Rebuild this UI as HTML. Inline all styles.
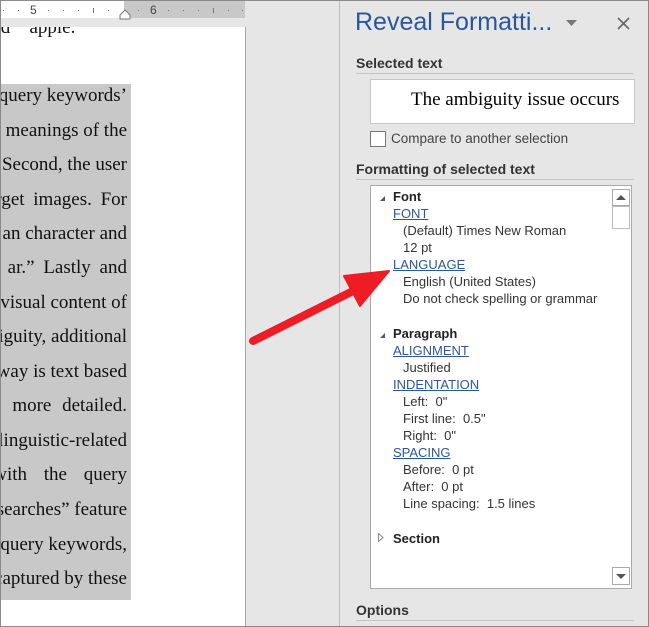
<!DOCTYPE html>
<html><head><meta charset="utf-8"><style>
*{margin:0;padding:0;box-sizing:border-box}
body{width:649px;height:627px;background:#e6e6e6;position:relative;overflow:hidden;font-family:"Liberation Sans",sans-serif}
.frame{position:absolute;left:0;top:0;width:649px;height:627px;border:1px solid #8a8a8a;pointer-events:none}
.abs{position:absolute}
.ln{position:absolute;right:0;width:300px;text-align:right;font-family:"Liberation Serif",serif;font-size:19px;color:#111;white-space:nowrap;line-height:22px}
.p{font-size:13px;color:#333;position:absolute;white-space:nowrap;line-height:16px}
.lk{color:#2b579a;text-decoration:underline}
.b{font-weight:bold;color:#222}
</style></head><body>
<!-- ruler -->
<div class="abs" style="left:0;top:1px;width:124px;height:17px;background:#fff"></div>
<div class="abs" style="left:124px;top:1px;width:121px;height:17px;background:#c8c8c8"></div>
<div class="abs" style="left:0;top:18px;width:246px;height:9px;background:#e6e6e6"></div>
<div class="abs" style="left:30px;top:3px;font-size:12px;color:#444">5</div>
<div class="abs" style="left:150px;top:3px;font-size:12px;color:#444">6</div>
<svg class="abs" style="left:0;top:0" width="246" height="18">
<g fill="#777"><rect x="3" y="10" width="1" height="1"/><rect x="18" y="10" width="1" height="1"/><rect x="48" y="10" width="1" height="1"/><rect x="63" y="10" width="1" height="1"/><rect x="78" y="10" width="1" height="1"/><rect x="93" y="8" width="1" height="5"/><rect x="108" y="10" width="1" height="1"/><rect x="138" y="10" width="1" height="1"/><rect x="168" y="10" width="1" height="1"/><rect x="183" y="10" width="1" height="1"/><rect x="198" y="10" width="1" height="1"/><rect x="213" y="8" width="1" height="5"/><rect x="228" y="10" width="1" height="1"/><rect x="242" y="10" width="1" height="1"/></g></svg>
<svg class="abs" style="left:119px;top:9px" width="12" height="11"><path d="M1 10 L1 6 L6 1 L11 6 L11 10 Z" fill="#fff" stroke="#777"/></svg>
<!-- page -->
<div class="abs" style="left:0;top:27px;width:246px;height:600px;background:#fff;border-right:1px solid #aaa;overflow:hidden">
 <div class="abs" style="left:-14px;top:-10px;font-family:'Liberation Serif',serif;font-size:19px;color:#111;white-space:nowrap;word-spacing:6px">ard “apple.”</div>
 <div class="abs" style="left:0;top:57px;width:131px;height:516px;background:#c8c8c8"></div>
 <div class="abs" style="left:0;top:0;width:127px;height:600px;overflow:hidden">
  <div class="ln" style="top:58px">query keywords’</div>
  <div class="ln" style="top:93px">meanings of the</div>
  <div class="ln" style="top:127px">Second, the user</div>
  <div class="ln" style="top:162px;word-spacing:4px">target images. For</div>
  <div class="ln" style="top:196px">an character and</div>
  <div class="ln" style="top:230px;word-spacing:4px">ar.” Lastly and</div>
  <div class="ln" style="top:265px">visual content of</div>
  <div class="ln" style="top:299px">biguity, additional</div>
  <div class="ln" style="top:334px">way is text based</div>
  <div class="ln" style="top:368px;word-spacing:6px">more detailed.</div>
  <div class="ln" style="top:403px">linguistic-related</div>
  <div class="ln" style="top:437px;word-spacing:12px">with the query</div>
  <div class="ln" style="top:472px">searches” feature</div>
  <div class="ln" style="top:507px">query keywords,</div>
  <div class="ln" style="top:541px">captured by these</div>
 </div>
</div>
<!-- panel -->
<div class="abs" style="left:339px;top:0;width:1px;height:627px;background:#bcbcbc"></div>
<div class="abs" style="left:355px;top:8px;font-size:25px;color:#2b579a;white-space:nowrap">Reveal Formatti...</div>
<svg class="abs" style="left:566px;top:20px" width="12" height="8"><path d="M0 0 L11 0 L5.5 6 Z" fill="#777"/></svg>
<svg class="abs" style="left:617px;top:17px" width="13" height="13"><path d="M1 1 L12 12 M12 1 L1 12" stroke="#666" stroke-width="1.6"/></svg>
<div class="abs b" style="left:356px;top:55px;font-size:14px;color:#333">Selected text</div>
<div class="abs" style="left:356px;top:73px;width:278px;height:1px;background:#c6c6c6"></div>
<div class="abs" style="left:370px;top:79px;width:265px;height:45px;background:#fff;border:1px solid #c6c6c6"></div>
<div class="abs" style="left:411px;top:89px;font-family:'Liberation Serif',serif;font-size:19px;color:#000;white-space:nowrap">The ambiguity issue occurs</div>
<div class="abs" style="left:370px;top:131px;width:16px;height:16px;background:#fff;border:1px solid #777"></div>
<div class="abs" style="left:391px;top:131px;font-size:13.5px;color:#444">Compare to another selection</div>
<div class="abs b" style="left:356px;top:161px;font-size:14px;color:#333">Formatting of selected text</div>
<div class="abs" style="left:356px;top:179px;width:278px;height:1px;background:#c6c6c6"></div>
<div class="abs" style="left:370px;top:185px;width:262px;height:404px;background:#fff;border:1px solid #aaa;overflow:hidden">
 <div class="abs" style="left:239px;top:0;width:22px;height:402px;background:#fff"></div>
 <div class="abs" style="left:241px;top:3px;width:18px;height:17px;border:1px solid #aaa"></div>
 <svg class="abs" style="left:245px;top:9px" width="10" height="6"><path d="M0 5 L5 0 L10 5Z" fill="#555"/></svg>
 <div class="abs" style="left:241px;top:20px;width:18px;height:23px;border:1px solid #bbb"></div>
 <div class="abs" style="left:241px;top:381px;width:18px;height:18px;border:1px solid #aaa"></div>
 <svg class="abs" style="left:245px;top:388px" width="10" height="6"><path d="M0 0 L10 0 L5 5Z" fill="#555"/></svg>
</div>
<svg class="abs" style="left:380px;top:196px" width="6" height="6"><path d="M0 5 L5 0 L5 5Z" fill="#555"/></svg>
<div class="p b" style="left:393px;top:189px">Font</div>
<div class="p lk" style="left:393px;top:206px">FONT</div>
<div class="p" style="left:403px;top:223px">(Default) Times New Roman</div>
<div class="p" style="left:403px;top:240px">12 pt</div>
<div class="p lk" style="left:393px;top:257px">LANGUAGE</div>
<div class="p" style="left:403px;top:274px">English (United States)</div>
<div class="p" style="left:403px;top:291px">Do not check spelling or grammar</div>
<svg class="abs" style="left:380px;top:333px" width="6" height="6"><path d="M0 5 L5 0 L5 5Z" fill="#555"/></svg>
<div class="p b" style="left:393px;top:326px">Paragraph</div>
<div class="p lk" style="left:393px;top:343px">ALIGNMENT</div>
<div class="p" style="left:403px;top:360px">Justified</div>
<div class="p lk" style="left:393px;top:377px">INDENTATION</div>
<div class="p" style="left:403px;top:394px">Left:&nbsp; 0"</div>
<div class="p" style="left:403px;top:411px">First line:&nbsp; 0.5"</div>
<div class="p" style="left:403px;top:428px">Right:&nbsp; 0"</div>
<div class="p lk" style="left:393px;top:445px">SPACING</div>
<div class="p" style="left:403px;top:462px">Before:&nbsp; 0 pt</div>
<div class="p" style="left:403px;top:479px">After:&nbsp; 0 pt</div>
<div class="p" style="left:403px;top:496px">Line spacing:&nbsp; 1.5 lines</div>
<svg class="abs" style="left:378px;top:533px" width="6" height="9"><path d="M0.5 0.5 L5 4.5 L0.5 8.5Z" fill="none" stroke="#888"/></svg>
<div class="p b" style="left:393px;top:531px">Section</div>
<div class="abs b" style="left:356px;top:602px;font-size:14px;color:#333">Options</div>
<div class="abs" style="left:356px;top:620px;width:278px;height:1px;background:#c6c6c6"></div>
<!-- arrow -->
<svg class="abs" style="left:0;top:0" width="649" height="627">
<path d="M253 341 L355 290" stroke="#ee1c25" stroke-width="8" stroke-linecap="round"/>
<path d="M389 271 L344 276 L360 306 Z" fill="#ee1c25" stroke="#ee1c25" stroke-width="2" stroke-linejoin="round"/>
</svg>
<div class="frame"></div>
</body></html>
